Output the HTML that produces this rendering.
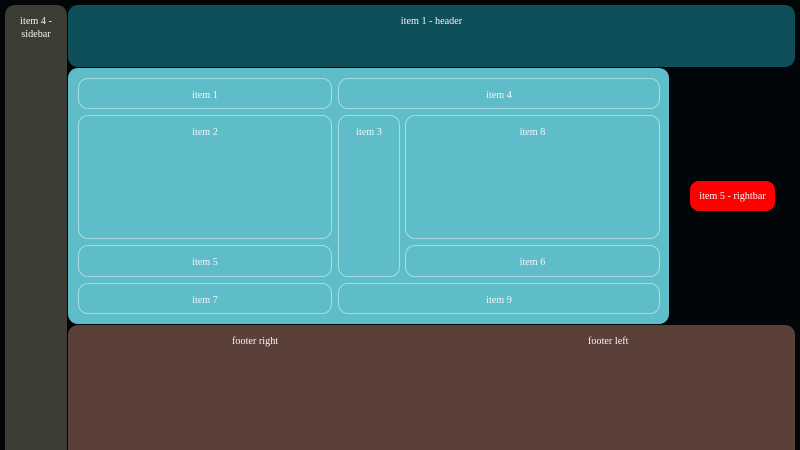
<!DOCTYPE html>
<html style="overflow:hidden;width:800px;height:450px"><head><style>
*{margin:0;padding:0;box-sizing:border-box}
body{width:800px;height:450px;background:#020608;position:relative;overflow:hidden;font-family:"Liberation Serif",serif;font-size:10.2px;color:#f4f4f4}
.b{position:absolute;text-align:center}
.sb{left:5px;top:5px;width:62px;height:445px;background:#3c3d35;border-radius:10px 10px 0 0;padding-top:10px;line-height:13px}
.hd{left:68px;top:5px;width:727px;height:62px;background:#0f4f5a;border-radius:10px;padding-top:11px}
.mn{left:68px;top:68px;width:601px;height:256px;background:#5fbdca;border-radius:10px}
.ft{left:68px;top:325px;width:727px;height:125px;background:#5b3f39;border-radius:10px 10px 0 0}
.rb{left:690px;top:181px;width:85px;height:30px;background:#fe0000;border-radius:9px;line-height:32px}
.i{position:absolute;border:1px solid #a6dde4;border-radius:10px;text-align:center;padding-top:10.5px}
</style></head><body>
<div class="b sb">item 4 -<br>sidebar</div>
<div class="b hd">item 1 - header</div>
<div class="b mn">
<div class="i" style="left:10px;top:10px;width:254px;height:31px">item 1</div>
<div class="i" style="left:270px;top:10px;width:322px;height:31px">item 4</div>
<div class="i" style="left:10px;top:47px;width:254px;height:124px">item 2</div>
<div class="i" style="left:270px;top:47px;width:62px;height:162px">item 3</div>
<div class="i" style="left:337px;top:47px;width:255px;height:124px">item 8</div>
<div class="i" style="left:10px;top:177px;width:254px;height:32px">item 5</div>
<div class="i" style="left:337px;top:177px;width:255px;height:32px">item 6</div>
<div class="i" style="left:10px;top:215px;width:254px;height:31px">item 7</div>
<div class="i" style="left:270px;top:215px;width:322px;height:31px">item 9</div>
</div>
<div class="b ft"><span style="position:absolute;left:164px;top:11px">footer right</span><span style="position:absolute;left:520px;top:11px">footer left</span></div>
<div class="b rb">item 5 - rightbar</div>
</body></html>
